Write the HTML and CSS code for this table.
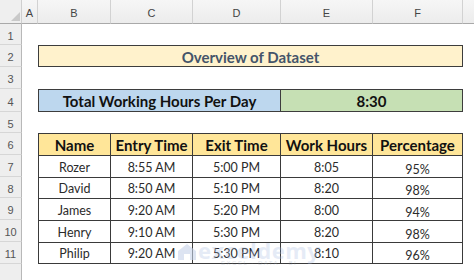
FILE: index.html
```html
<!DOCTYPE html>
<html>
<head>
<meta charset="utf-8">
<link rel="stylesheet" href="styles.css">
</head>
<body>
<div class="sheet">
  <div class="corner"><svg width="22" height="24" viewBox="0 0 22 24"><polygon points="20,12 20,21 11,21" fill="#c9c9c9"/></svg></div>
  <div class="colhead">A</div>
  <div class="colhead">B</div>
  <div class="colhead">C</div>
  <div class="colhead">D</div>
  <div class="colhead">E</div>
  <div class="colhead">F</div>
  <div class="colhead last"></div>

  <div class="rowhead r1">1</div>
  <div class="rowhead r2">2</div>
  <div class="rowhead r3">3</div>
  <div class="rowhead r4">4</div>
  <div class="rowhead r5">5</div>
  <div class="rowhead r6">6</div>
  <div class="rowhead r7">7</div>
  <div class="rowhead r8">8</div>
  <div class="rowhead r9">9</div>
  <div class="rowhead r10">10</div>
  <div class="rowhead r11">11</div>
  <div class="rowhead r12"></div>

  <div class="banner">Overview of Dataset</div>

  <div class="total">
    <div class="total-label">Total Working Hours Per Day</div>
    <div class="total-value">8:30</div>
  </div>

  <div class="data">
    <div class="th">Name</div><div class="th">Entry Time</div><div class="th">Exit Time</div><div class="th">Work Hours</div><div class="th">Percentage</div>
    <div class="td">Rozer</div><div class="td">8:55 AM</div><div class="td">5:00 PM</div><div class="td">8:05</div><div class="td pct">95%</div>
    <div class="td">David</div><div class="td">8:50 AM</div><div class="td">5:10 PM</div><div class="td">8:20</div><div class="td pct">98%</div>
    <div class="td">James</div><div class="td">9:20 AM</div><div class="td">5:20 PM</div><div class="td">8:00</div><div class="td pct">94%</div>
    <div class="td">Henry</div><div class="td">9:10 AM</div><div class="td">5:30 PM</div><div class="td">8:20</div><div class="td pct">98%</div>
    <div class="td">Philip</div><div class="td">9:20 AM</div><div class="td">5:30 PM</div><div class="td">8:10</div><div class="td pct">96%</div>
  </div>

  <div class="watermark">
    <svg class="wm-logo" width="20" height="18" viewBox="0 0 20 18"><path d="M10 1 L19 8 L19 17 L13 17 L13 11 L7 11 L7 17 L1 17 L1 8 Z" fill="#c7d3ea"/></svg>
    <div class="wm-text">
      <div class="wm-name">exceldemy</div>
      <div class="wm-sub">EXCEL · DATA · BI</div>
    </div>
  </div>
</div>
</body>
</html>
```

FILE: styles.css
```css
html, body {
  margin: 0;
  padding: 0;
  background: #ffffff;
}

.sheet {
  position: relative;
  width: 474px;
  height: 280px;
  overflow: hidden;
  display: grid;
  grid-template-columns: 22px 16px 73px 82px 88px 92px 90px 11px;
  grid-template-rows: 24px 21px 22px 22px 23px 21px 22px 22px 21px 22px 22px 22px 16px;
  font-family: Lato, "Open Sans", sans-serif;
  background: #ffffff;
}

.corner {
  grid-column: 1;
  grid-row: 1;
  background: #efefef;
  border-right: 1px solid #cfcfcf;
  border-bottom: 1px solid #a9a9a9;
  box-sizing: border-box;
}
.corner svg { display: block; }

.colhead {
  grid-row: 1;
  box-sizing: border-box;
  background: linear-gradient(#f6f6f6, #ececec);
  border-right: 1px solid #d2d2d2;
  border-bottom: 1px solid #a9a9a9;
  display: flex;
  align-items: center;
  justify-content: center;
  font-family: "Liberation Sans", Arial, sans-serif;
  font-size: 11px;
  color: #444444;
  padding-top: 2px;
}
.colhead.last { border-right: none; }

.rowhead {
  grid-column: 1;
  box-sizing: border-box;
  background: #eeeeee;
  border-right: 1px solid #b8b8b8;
  border-bottom: 1px solid #d6d6d6;
  display: flex;
  align-items: center;
  justify-content: center;
  font-family: "Liberation Sans", Arial, sans-serif;
  font-size: 11px;
  color: #555555;
  padding-top: 3px;
}
.r1 { grid-row: 2; }
.r2 { grid-row: 3; }
.r3 { grid-row: 4; }
.r4 { grid-row: 5; }
.r5 { grid-row: 6; }
.r6 { grid-row: 7; }
.r7 { grid-row: 8; }
.r8 { grid-row: 9; }
.r9 { grid-row: 10; }
.r10 { grid-row: 11; }
.r11 { grid-row: 12; }
.r12 { grid-row: 13; border-bottom: none; }

.banner {
  grid-column: 3 / 8;
  grid-row: 3;
  box-sizing: border-box;
  border: 1px solid #3d3d3d;
  background: #fff2cc;
  color: #44546a;
  font-weight: 700;
  font-size: 15px;
  display: flex;
  align-items: center;
  justify-content: center;
  padding-top: 1px;
}

.total {
  grid-column: 3 / 8;
  grid-row: 5;
  box-sizing: border-box;
  border: 1px solid #3d3d3d;
  display: grid;
  grid-template-columns: 242px 1fr;
  font-weight: 700;
  font-size: 15px;
  color: #111111;
}
.total-label {
  background: #bdd7ee;
  border-right: 1px solid #3d3d3d;
  display: flex;
  align-items: center;
  justify-content: center;
  padding-top: 1px;
}
.total-value {
  background: #c6e0b4;
  display: flex;
  align-items: center;
  justify-content: center;
  padding-top: 1px;
}

.data {
  grid-column: 3 / 8;
  grid-row: 7 / 13;
  box-sizing: border-box;
  border-top: 1px solid #3a3a3a;
  border-left: 1px solid #3a3a3a;
  display: grid;
  grid-template-columns: 72px 82px 88px 92px 90px;
  grid-template-rows: 22px 22px 21px 22px 22px 21px;
}
.th, .td {
  box-sizing: border-box;
  border-right: 1px solid #3a3a3a;
  border-bottom: 1px solid #3a3a3a;
  display: flex;
  align-items: center;
  justify-content: center;
}
.th {
  background: #ffe699;
  font-weight: 700;
  font-size: 15px;
  color: #111111;
  padding-top: 1px;
}
.td {
  background: #ffffff;
  font-size: 12.5px;
  color: #2b2b2b;
  padding-top: 1px;
}
.td.pct { padding-top: 5px; }

.watermark {
  position: absolute;
  left: 177px;
  top: 240px;
  display: flex;
  align-items: flex-start;
  gap: 1px;
  opacity: 0.6;
  pointer-events: none;
}
.wm-logo { margin-top: 3px; }
.wm-text {
  display: flex;
  flex-direction: column;
  align-items: center;
}
.wm-name {
  font-family: "Open Sans", sans-serif;
  font-weight: 700;
  font-size: 22px;
  line-height: 20px;
  color: rgba(170, 190, 228, 0.5);
  letter-spacing: 0.5px;
}
.wm-sub {
  font-family: "Liberation Sans", Arial, sans-serif;
  font-size: 6px;
  letter-spacing: 1.5px;
  color: rgba(150, 160, 180, 0.5);
  line-height: 7px;
}
```
